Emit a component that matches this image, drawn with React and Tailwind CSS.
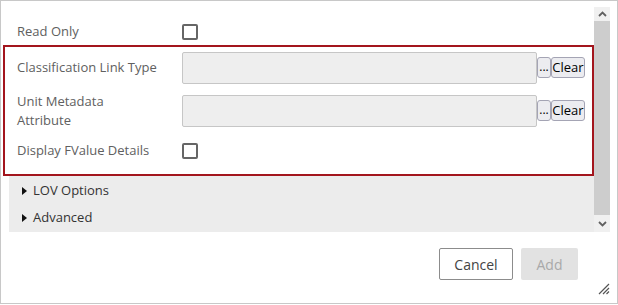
import React from "react";

const font = { fontFamily: '"Open Sans", "Noto Sans", sans-serif' };

function Checkbox() {
  return <div className="w-[16px] h-[16px] border-2 border-[#666666] rounded-[2px] bg-white" />;
}

function PickerField() {
  return (
    <div className="flex items-center">
      <div className="w-[355px] h-[32px] bg-[#eeeeee] border border-[#c6c6c6] rounded-[2px]" />
      <button className="h-[21px] w-[14px] -mt-[2px] border border-[#a4a4b4] rounded-[3px] bg-[#ececf0] text-[12px] leading-none text-black flex items-end justify-center pb-[4px]">
        ...
      </button>
      <button className="h-[21px] w-[34px] -mt-[2px] border border-[#a4a4b4] rounded-[3px] bg-[#ececf0] text-[13px] leading-none text-black flex items-center justify-center">
        Clear
      </button>
    </div>
  );
}

export default function App() {
  return (
    <div className="w-[618px] h-[305px] bg-white" style={font}>
      <div className="w-[618px] h-[304px] border border-[#c8c8c8] flex flex-col">
        <div className="flex mt-[6px] h-[225px]">
          <div className="flex-1 flex flex-col">
            {/* Read Only */}
            <div className="h-[38px] flex items-center pl-[16px] pt-[12px]">
              <div className="w-[165px] text-[13px] text-[#606060]">Read Only</div>
              <Checkbox />
            </div>
            {/* Highlighted group */}
            <div className="ml-[2px] border-2 border-[#a3151d] h-[131px] pl-[12px] flex flex-col">
              <div className="h-[42px] flex items-center">
                <div className="w-[165px] text-[13px] text-[#606060]">Classification Link Type</div>
                <PickerField />
              </div>
              <div className="h-[44px] flex items-center">
                <div className="w-[165px] text-[13px] leading-[19px] text-[#606060]">
                  Unit Metadata
                  <br />
                  Attribute
                </div>
                <PickerField />
              </div>
              <div className="h-[36px] flex items-center">
                <div className="w-[165px] text-[13px] text-[#606060]">Display FValue Details</div>
                <Checkbox />
              </div>
            </div>
            {/* Collapsed sections */}
            <div className="ml-[8px] flex-1 bg-[#ececec] pl-[13px] pt-[1px] flex flex-col">
              <div className="h-[27px] flex items-center gap-[6px] text-[13px] text-[#333333]">
                <svg width="5" height="8" viewBox="0 0 5 8"><path d="M0 0 L5 4 L0 8 Z" fill="#111" /></svg>
                LOV Options
              </div>
              <div className="h-[27px] flex items-center gap-[6px] text-[13px] text-[#333333]">
                <svg width="5" height="8" viewBox="0 0 5 8"><path d="M0 0 L5 4 L0 8 Z" fill="#111" /></svg>
                Advanced
              </div>
            </div>
          </div>
          {/* Scrollbar */}
          <div className="w-[16px] flex flex-col bg-[#f0f0f0]">
            <div className="h-[14px] flex items-center justify-center">
              <svg width="9" height="6" viewBox="0 0 9 6"><path d="M1 5 L4.5 1.5 L8 5" fill="none" stroke="#606060" strokeWidth="1.8" /></svg>
            </div>
            <div className="flex-1 bg-[#cdcdcd]" />
            <div className="h-[17px] flex items-center justify-center">
              <svg width="9" height="6" viewBox="0 0 9 6"><path d="M1 1 L4.5 4.5 L8 1" fill="none" stroke="#606060" strokeWidth="1.8" /></svg>
            </div>
          </div>
          <div className="w-[7px]" />
        </div>
        {/* Footer */}
        <div className="flex-1 flex justify-end items-start pt-[16px] pr-[39px] gap-[8px] relative">
          <button className="w-[74px] h-[32px] border border-[#8c8c8c] rounded-[2px] bg-white text-[14px] text-[#444444]">Cancel</button>
          <button className="w-[57px] h-[32px] rounded-[2px] bg-[#e2e2e2] text-[14px] text-[#a9a9a9]">Add</button>
          <svg className="absolute right-[7px] bottom-[8px]" width="12" height="12" viewBox="0 0 12 12">
            <path d="M1 11 L11 1 M5 11 L11 5 M8.5 11 L11 8.5" stroke="#555" strokeWidth="1.2" fill="none" />
          </svg>
        </div>
      </div>
    </div>
  );
}
